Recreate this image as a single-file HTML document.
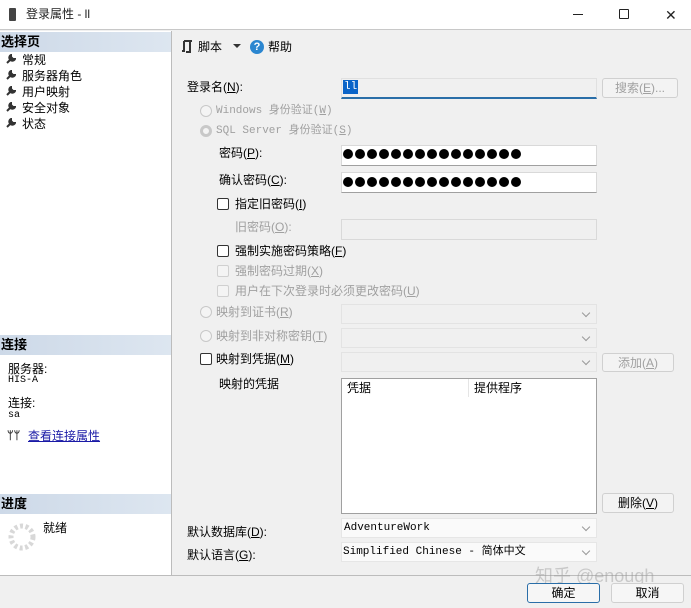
<!DOCTYPE html>
<html><head><meta charset="utf-8">
<style>
*{box-sizing:border-box;margin:0;padding:0}
body{width:691px;height:608px;overflow:hidden;background:#f0f0f0;font-family:"Liberation Sans","Noto Sans CJK SC",sans-serif;font-size:12px;color:#000;position:relative}
.a{position:absolute;white-space:nowrap;line-height:14px}
.dis{color:#a0a0a0}
.mono{font-family:"Liberation Mono","Noto Sans CJK SC",monospace;font-size:11px}
.inp{position:absolute;background:#fff;border:1px solid #d9d9d9;border-bottom:1px solid #a0a0a0}
.dinp{position:absolute;background:#f0f0f0;border:1px solid #d9d9d9}
.dd{position:absolute;background:#f0f0f0;border:1px solid #e3e3e3}
.dd::after{content:"";position:absolute;right:7px;top:5px;width:5px;height:5px;border-right:1px solid #999;border-bottom:1px solid #999;transform:rotate(45deg)}
.btn{position:absolute;border:1px solid #d0d0d0;border-radius:3px;background:#f3f3f3;text-align:center;line-height:18px}
.rad{position:absolute;width:12px;height:12px;border:1px solid #c8c8c8;border-radius:50%;background:#f4f4f4}
.chk{position:absolute;width:12px;height:12px;border:1px solid #333;border-radius:2px;background:#fff}
.chk.d{border-color:#d0d0d0;background:#f4f4f4}
.hdr{position:absolute;left:0;width:171px;height:20px;background:linear-gradient(to right,#cdd9e8,#dde6f0);font-weight:bold;font-size:13px;line-height:20px;padding-left:1px}
.wr{position:absolute;left:6px;width:10px;height:10px}
.dots{position:absolute;display:flex;gap:2px}
.dots i{display:block;width:10px;height:10px;border-radius:50%;background:#000}
</style></head><body>
<div style="position:absolute;left:0;top:0;width:691px;height:30px;background:#fff;border-bottom:1px solid #c8c8c8"></div>
<div style="position:absolute;left:9px;top:8px;width:7px;height:13px;background:#444;border-radius:1px"></div>
<div class="a" style="left:26px;top:7px;font-size:12px;color:#222">登录属性 - ll</div>
<div style="position:absolute;left:573px;top:14px;width:10px;height:1px;background:#222"></div>
<div style="position:absolute;left:619px;top:9px;width:10px;height:10px;border:1px solid #222;border-radius:1px"></div>
<div class="a" style="left:665px;top:8px;font-size:14px;color:#222">✕</div>

<div style="position:absolute;left:0;top:31px;width:172px;height:544px;background:#fff;border-right:1px solid #bcbcbc"></div>
<div class="hdr" style="top:32px">选择页</div>
<svg class="wr" style="top:54px" viewBox="0 0 10 10"><path d="M1 9L6 4M5 1a3 3 0 1 0 4 4L7 5 5 3z" stroke="#333" stroke-width="2" fill="#333"/></svg>
<div class="a" style="left:22px;top:53px">常规</div>
<svg class="wr" style="top:70px" viewBox="0 0 10 10"><path d="M1 9L6 4M5 1a3 3 0 1 0 4 4L7 5 5 3z" stroke="#333" stroke-width="2" fill="#333"/></svg>
<div class="a" style="left:22px;top:69px">服务器角色</div>
<svg class="wr" style="top:86px" viewBox="0 0 10 10"><path d="M1 9L6 4M5 1a3 3 0 1 0 4 4L7 5 5 3z" stroke="#333" stroke-width="2" fill="#333"/></svg>
<div class="a" style="left:22px;top:85px">用户映射</div>
<svg class="wr" style="top:102px" viewBox="0 0 10 10"><path d="M1 9L6 4M5 1a3 3 0 1 0 4 4L7 5 5 3z" stroke="#333" stroke-width="2" fill="#333"/></svg>
<div class="a" style="left:22px;top:101px">安全对象</div>
<svg class="wr" style="top:118px" viewBox="0 0 10 10"><path d="M1 9L6 4M5 1a3 3 0 1 0 4 4L7 5 5 3z" stroke="#333" stroke-width="2" fill="#333"/></svg>
<div class="a" style="left:22px;top:117px">状态</div>

<div class="hdr" style="top:335px">连接</div>
<div class="a" style="left:8px;top:362px">服务器:</div>
<div class="a mono" style="left:8px;top:374px;font-size:10px">HIS-A</div>
<div class="a" style="left:8px;top:396px">连接:</div>
<div class="a mono" style="left:8px;top:409px;font-size:10px">sa</div>
<div class="a" style="left:7px;top:429px;font-size:11px;font-weight:bold;color:#333">ᛘᛘ</div>
<div class="a" style="left:28px;top:429px;color:#1a1aa6;text-decoration:underline">查看连接属性</div>

<div class="hdr" style="top:494px">进度</div>
<svg style="position:absolute;left:7px;top:522px" width="30" height="30" viewBox="0 0 30 30"><circle cx="15" cy="15" r="11" fill="none" stroke="#d8d8d8" stroke-width="5" stroke-dasharray="3 2.5"/></svg>
<div class="a" style="left:43px;top:521px">就绪</div>

<svg style="position:absolute;left:181px;top:40px" width="12" height="13" viewBox="0 0 12 13"><path d="M3 1h8M3 1v10H1M9 1v11H5" stroke="#333" stroke-width="2" fill="none"/></svg>
<div class="a" style="left:198px;top:40px">脚本</div>
<div style="position:absolute;left:233px;top:44px;border-left:4px solid transparent;border-right:4px solid transparent;border-top:4px solid #333"></div>
<div style="position:absolute;left:250px;top:40px;width:14px;height:14px;border-radius:50%;background:#2b86d0;color:#fff;font-weight:bold;font-size:11px;text-align:center;line-height:14px">?</div>
<div class="a" style="left:268px;top:40px">帮助</div>

<div class="a" style="left:187px;top:80px">登录名(<u>N</u>):</div>
<div style="position:absolute;left:341px;top:78px;width:256px;height:21px;background:#f0f0f0;border:1px solid #e0e0e0;border-bottom:2px solid #2a6ea8"></div>
<div class="a mono" style="left:343px;top:80px;background:#0a64c8;color:#fff;padding:0 1px">ll</div>
<div class="btn dis" style="left:602px;top:78px;width:76px;height:20px">搜索(<u>E</u>)...</div>

<div class="rad" style="left:200px;top:105px"></div>
<div class="a mono dis" style="left:216px;top:104px">Windows 身份验证(<u>W</u>)</div>
<div class="rad" style="left:200px;top:125px;border:3px solid #c8c8c8"></div>
<div class="a mono dis" style="left:216px;top:124px">SQL Server 身份验证(<u>S</u>)</div>

<div class="a" style="left:219px;top:146px">密码(<u>P</u>):</div>
<div class="inp" style="left:341px;top:145px;width:256px;height:21px"></div>
<div class="dots" style="left:343px;top:149px"><i></i><i></i><i></i><i></i><i></i><i></i><i></i><i></i><i></i><i></i><i></i><i></i><i></i><i></i><i></i></div>
<div class="a" style="left:219px;top:173px">确认密码(<u>C</u>):</div>
<div class="inp" style="left:341px;top:172px;width:256px;height:21px"></div>
<div class="dots" style="left:343px;top:177px"><i></i><i></i><i></i><i></i><i></i><i></i><i></i><i></i><i></i><i></i><i></i><i></i><i></i><i></i><i></i></div>

<div class="chk" style="left:217px;top:198px"></div>
<div class="a" style="left:235px;top:197px">指定旧密码(<u>I</u>)</div>
<div class="a dis" style="left:235px;top:220px">旧密码(<u>O</u>):</div>
<div class="dinp" style="left:341px;top:219px;width:256px;height:21px"></div>

<div class="chk" style="left:217px;top:245px"></div>
<div class="a" style="left:235px;top:244px">强制实施密码策略(<u>F</u>)</div>
<div class="chk d" style="left:217px;top:265px"></div>
<div class="a dis" style="left:235px;top:264px">强制密码过期(<u>X</u>)</div>
<div class="chk d" style="left:217px;top:285px"></div>
<div class="a dis" style="left:235px;top:284px">用户在下次登录时必须更改密码(<u>U</u>)</div>

<div class="rad" style="left:200px;top:306px"></div>
<div class="a dis" style="left:216px;top:305px">映射到证书(<u>R</u>)</div>
<div class="dd" style="left:341px;top:304px;width:256px;height:20px"></div>
<div class="rad" style="left:200px;top:330px"></div>
<div class="a dis" style="left:216px;top:329px">映射到非对称密钥(<u>T</u>)</div>
<div class="dd" style="left:341px;top:328px;width:256px;height:20px"></div>
<div class="chk" style="left:200px;top:353px"></div>
<div class="a" style="left:216px;top:352px">映射到凭据(<u>M</u>)</div>
<div class="dd" style="left:341px;top:352px;width:256px;height:20px"></div>
<div class="btn dis" style="left:602px;top:353px;width:72px;height:19px">添加(<u>A</u>)</div>

<div class="a" style="left:219px;top:377px">映射的凭据</div>
<div style="position:absolute;left:341px;top:378px;width:256px;height:136px;background:#fff;border:1px solid #a0a0a0"></div>
<div class="a" style="left:347px;top:381px">凭据</div>
<div style="position:absolute;left:468px;top:379px;width:1px;height:18px;background:#e5e5e5"></div>
<div class="a" style="left:474px;top:381px">提供程序</div>
<div class="btn" style="left:602px;top:493px;width:72px;height:20px">删除(<u>V</u>)</div>

<div class="a" style="left:187px;top:525px">默认数据库(<u>D</u>):</div>
<div class="dd" style="left:341px;top:518px;width:256px;height:20px;background:#fafafa;border-color:#e6e6e6"></div>
<div class="a mono" style="left:344px;top:521px">AdventureWork</div>
<div class="a" style="left:187px;top:548px">默认语言(<u>G</u>):</div>
<div class="dd" style="left:341px;top:542px;width:256px;height:20px;background:#fafafa;border-color:#e6e6e6"></div>
<div class="a mono" style="left:343px;top:545px">Simplified Chinese - 简体中文</div>

<div style="position:absolute;left:0;top:575px;width:691px;height:1px;background:#bcbcbc"></div>
<div class="a" style="left:535px;top:564px;font-size:18px;color:rgba(150,150,150,0.45);line-height:24px">知乎 @enough</div>
<div class="btn" style="left:527px;top:583px;width:73px;height:20px;border:1px solid #2a6ea8;background:#f6f6f6">确定</div>
<div class="btn" style="left:611px;top:583px;width:73px;height:20px;background:#f6f6f6">取消</div>
</body></html>
